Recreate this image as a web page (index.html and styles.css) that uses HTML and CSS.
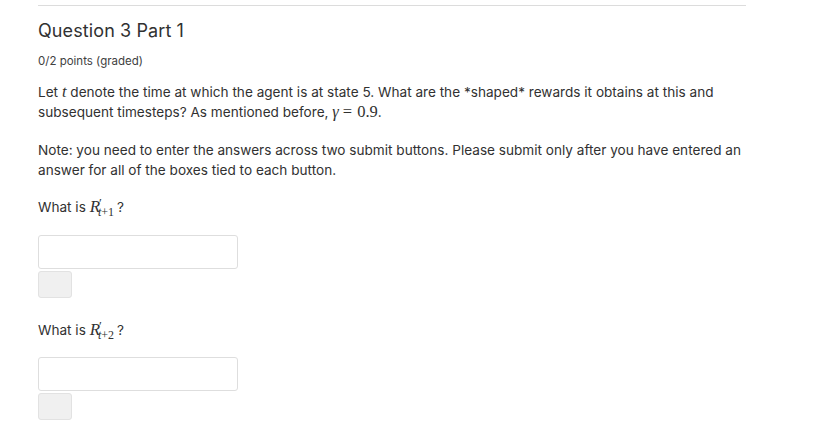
FILE: index.html
```html
<!DOCTYPE html>
<html>
<head>
<meta charset="utf-8">
<link rel="stylesheet" href="styles.css">
</head>
<body>
<div class="page">
  <hr class="rule">
  <h2 class="title">Question 3 Part 1</h2>
  <div class="points">0/2 points (graded)</div>
  <p class="para">Let <span class="mi">t</span> denote the time at which the agent is at state 5. What are the *shaped* rewards it obtains at this and subsequent timesteps? As mentioned before, <span class="mi">γ</span><span class="mo">=</span><span class="mn">0.9</span>.</p>
  <p class="para">Note: you need to enter the answers across two submit buttons. Please submit only after you have entered an answer for all of the boxes tied to each button.</p>
  <div class="q">
    <p class="label">What is <span class="mi">R</span><span class="sup">′</span><sub class="sub"><span class="mi">t</span>+1</sub>?</p>
    <input class="box" type="text">
    <button class="btn"></button>
  </div>
  <div class="q">
    <p class="label">What is <span class="mi">R</span><span class="sup">′</span><sub class="sub"><span class="mi">t</span>+2</sub>?</p>
    <input class="box" type="text">
    <button class="btn"></button>
  </div>
</div>
</body>
</html>
```
FILE: styles.css
```css
html, body { margin: 0; padding: 0; background: #fff; }
body { font-family: Inter, "Open Sans", sans-serif; color: #313131; }
.page { padding: 5px 0 0 38px; width: 708px; }
.rule { margin: 0; border: 0; border-top: 1px solid #dcdcdc; height: 0; }
.title { margin: 13px 0 0; font-size: 18px; font-weight: 400; line-height: 24px; color: #313131; letter-spacing: 0.1px; }
.points { margin-top: 10px; font-size: 11.5px; line-height: 16px; color: #414141; }
.para { margin: 13px 0 0; font-size: 13.6px; line-height: 20px; }
.para + .para { margin-top: 18px; }
.mi, .mo, .mn { font-family: "Liberation Serif", serif; font-size: 16.5px; line-height: 0; }
.mi { font-style: italic; }
.mo { margin: 0 5px 0 4px; }
.q { margin-top: 17px; }
.label { margin: 0; font-size: 13.6px; line-height: 20px; }
.label .mi { font-size: 17px; }
.sup { font-family: "Liberation Serif", serif; font-size: 13px; line-height: 0; vertical-align: 5px; margin-left: -1px; }
.sub { font-family: "Liberation Serif", serif; font-size: 12px; line-height: 0; margin-left: -4px; margin-right: 3px; vertical-align: -4px; }
.label .sub .mi { font-size: 12px; }
.box { display: block; margin-top: 18px; box-sizing: border-box; width: 200px; height: 34px; border: 1px solid #dedede; border-radius: 3px; background: #fff; padding: 0; }
.btn { display: block; margin-top: 2px; box-sizing: border-box; width: 34px; height: 27px; border: 1px solid #e2e2e2; border-radius: 3px; background: #f0f0f0; padding: 0; }
.q + .q { margin-top: 22px; }
.q + .q .box { margin-top: 17px; }
```
